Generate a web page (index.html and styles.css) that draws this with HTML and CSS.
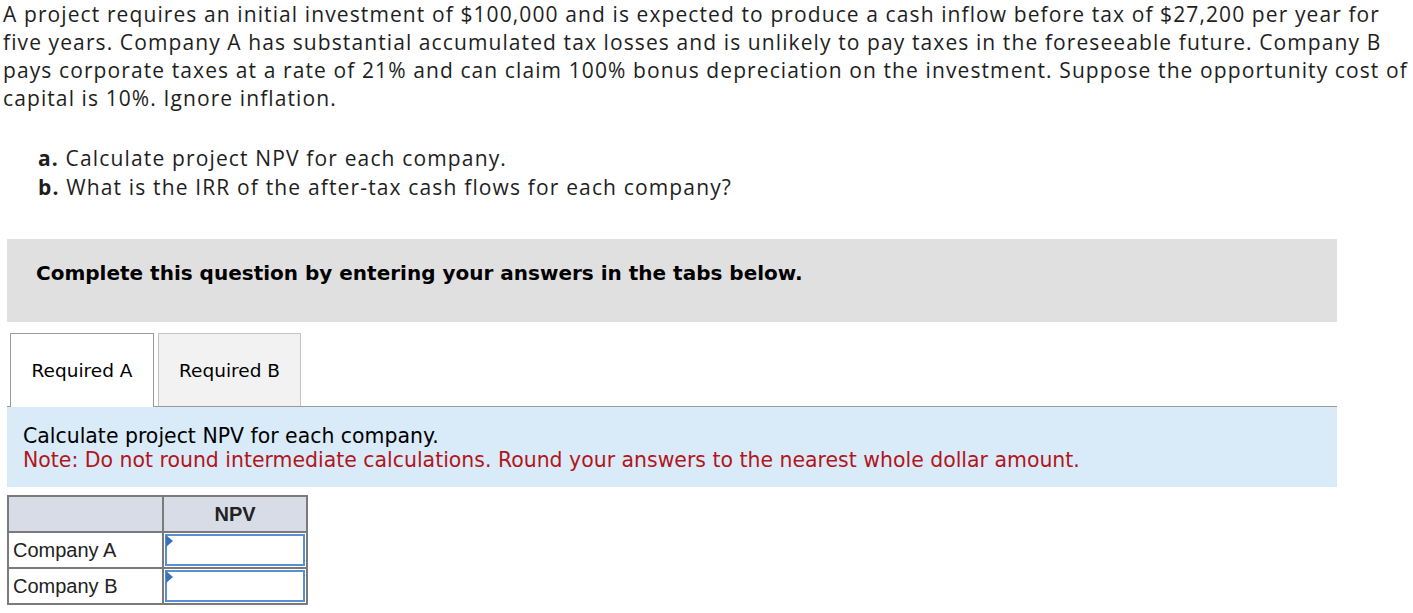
FILE: index.html
```html
<!DOCTYPE html>
<html>
<head>
<meta charset="utf-8">
<link rel="stylesheet" href="styles.css">
</head>
<body>
<p class="intro">A project requires an initial investment of $100,000 and is expected to produce a cash inflow before tax of $27,200 per year for<br>five years. Company A has substantial accumulated tax losses and is unlikely to pay taxes in the foreseeable future. Company B<br>pays corporate taxes at a rate of 21% and can claim 100% bonus depreciation on the investment. Suppose the opportunity cost of<br>capital is 10%. Ignore inflation.</p>
<ol class="parts">
  <li><b>a.</b> Calculate project NPV for each company.</li>
  <li><b>b.</b> What is the IRR of the after-tax cash flows for each company?</li>
</ol>
<div class="question">
  <div class="banner">Complete this question by entering your answers in the tabs below.</div>
  <div class="tabs">
    <div class="tab active">Required A</div>
    <div class="tab">Required B</div>
  </div>
  <div class="instructions">
    <div>Calculate project NPV for each company.</div>
    <div class="note">Note: Do not round intermediate calculations. Round your answers to the nearest whole dollar amount.</div>
  </div>
  <table class="grid">
    <tr><th class="blank"></th><th>NPV</th></tr>
    <tr><td class="label">Company A</td><td class="cell"><div class="input"><span class="flag"></span></div></td></tr>
    <tr><td class="label">Company B</td><td class="cell"><div class="input"><span class="flag"></span></div></td></tr>
  </table>
</div>
</body>
</html>
```

FILE: styles.css
```css
html, body {
  margin: 0;
  padding: 0;
  background: #fff;
}
body {
  color: #1a1a1a;
}
.intro {
  margin: 0;
  padding: 0 0 0 3px;
  white-space: nowrap;
  font-family: "Open Sans", "Liberation Sans", sans-serif;
  font-size: 21px;
  letter-spacing: 1.1px;
  line-height: 28px;
  color: #1e1e1e;
}
.parts {
  list-style: none;
  margin: 32px 0 0 0;
  padding: 0 0 0 38px;
  font-family: "Open Sans", "Liberation Sans", sans-serif;
  font-size: 21px;
  letter-spacing: 1.15px;
  line-height: 29px;
  color: #1e1e1e;
}
.parts b {
  font-weight: 700;
}
.question {
  margin: 37px 0 0 7px;
  width: 1330px;
  font-family: "DejaVu Sans", Verdana, sans-serif;
}
.banner {
  background: #e0e0e0;
  height: 83px;
  box-sizing: border-box;
  padding: 22px 0 0 29px;
  line-height: 24px;
  font-weight: 700;
  font-size: 20px;
  color: #000;
}
.tabs {
  display: flex;
  gap: 4px;
  margin-top: 11px;
  padding-left: 3px;
  border-bottom: 1px solid #9a9a9a;
  height: 73px;
}
.tab {
  width: 143px;
  display: flex;
  align-items: center;
  justify-content: center;
  font-size: 18.5px;
  color: #000;
  background: #f2f2f2;
  border: 1px solid #c4c4c4;
  border-bottom: none;
  box-sizing: border-box;
}
.tab.active {
  width: 144px;
  background: #fff;
  border-color: #9a9a9a;
  margin-bottom: -1px;
}
.instructions {
  background: #d9ebf9;
  height: 80px;
  box-sizing: border-box;
  padding: 17px 0 0 16px;
  font-size: 20.45px;
  line-height: 24px;
  color: #000;
}
.note {
  color: #b2151b;
}
.grid {
  margin-top: 8px;
  border-collapse: collapse;
  font-family: "Liberation Sans", Arial, sans-serif;
  font-size: 20px;
}
.grid th, .grid td {
  border: 2px solid #7a7a7a;
  padding: 0;
  height: 34px;
}
.grid th {
  background: #d8dce6;
  font-weight: 700;
  color: #222;
  width: 142px;
}
.grid th.blank {
  width: 153px;
}
.grid td.label {
  padding-left: 4px;
  color: #222;
}
.grid td.cell {
  padding: 1px;
  height: 36px;
  box-sizing: border-box;
}
.input {
  position: relative;
  height: 32px;
  border: 2px solid #5b8fd2;
  box-sizing: border-box;
  background: #fff;
}
.flag {
  position: absolute;
  left: -1px;
  top: -1px;
  width: 0;
  height: 0;
  border-top: 6px solid transparent;
  border-bottom: 6px solid transparent;
  border-left: 7px solid #3a72ba;
}
```
